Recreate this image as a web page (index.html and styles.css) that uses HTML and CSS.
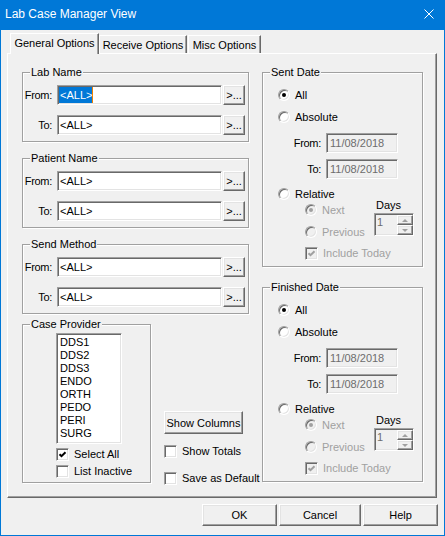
FILE: index.html
```html
<!DOCTYPE html>
<html lang="en">
<head>
    <meta charset="UTF-8">
    <title>Lab Case Manager View</title>
    <link rel="stylesheet" href="styles.css">
</head>
<body>
    <div class="window">
        <div class="titlebar">
            <span class="title">Lab Case Manager View</span>
            <svg class="close" width="10" height="10" viewBox="0 0 10 10">
                <path d="M0.5 0.5L9.5 9.5M9.5 0.5L0.5 9.5" stroke="#fff" stroke-width="1"/>
            </svg>
        </div>

        <div class="tabs">
            <div class="tab tab-general active">General Options</div>
            <div class="tab tab-receive">Receive Options</div>
            <div class="tab tab-misc">Misc Options</div>
        </div>

        <div class="panel">
            <div class="col-left">
                <fieldset class="group range">
                    <legend>Lab Name</legend>
                    <div class="body">
                        <div class="row"><label class="lbl">From:</label><div class="edit"><span class="sel">&lt;ALL&gt;</span></div><button class="btn pick">&gt;...</button></div>
                        <div class="row"><label class="lbl">To:</label><div class="edit">&lt;ALL&gt;</div><button class="btn pick">&gt;...</button></div>
                    </div>
                </fieldset>

                <fieldset class="group range">
                    <legend>Patient Name</legend>
                    <div class="body">
                        <div class="row"><label class="lbl">From:</label><div class="edit">&lt;ALL&gt;</div><button class="btn pick">&gt;...</button></div>
                        <div class="row"><label class="lbl">To:</label><div class="edit">&lt;ALL&gt;</div><button class="btn pick">&gt;...</button></div>
                    </div>
                </fieldset>

                <fieldset class="group range">
                    <legend>Send Method</legend>
                    <div class="body">
                        <div class="row"><label class="lbl">From:</label><div class="edit">&lt;ALL&gt;</div><button class="btn pick">&gt;...</button></div>
                        <div class="row"><label class="lbl">To:</label><div class="edit">&lt;ALL&gt;</div><button class="btn pick">&gt;...</button></div>
                    </div>
                </fieldset>

                <div class="provider-row">
                    <fieldset class="group provider">
                        <legend>Case Provider</legend>
                        <div class="body">
                            <div class="list">
                                <div>DDS1</div>
                                <div>DDS2</div>
                                <div>DDS3</div>
                                <div>ENDO</div>
                                <div>ORTH</div>
                                <div>PEDO</div>
                                <div>PERI</div>
                                <div>SURG</div>
                            </div>
                            <div class="check-row select-all">
                                <span class="check"><svg width="9" height="9" viewBox="0 0 9 9"><path d="M1.5 4.2L3.5 6.2L7.5 2.2" fill="none" stroke="#000" stroke-width="2"/></svg></span>
                                <span class="check-text">Select All</span>
                            </div>
                            <div class="check-row list-inactive">
                                <span class="check"></span>
                                <span class="check-text">List Inactive</span>
                            </div>
                        </div>
                    </fieldset>

                    <div class="side">
                        <button class="btn cols-btn">Show Columns</button>
                        <div class="check-row show-totals">
                            <span class="check"></span>
                            <span class="check-text">Show Totals</span>
                        </div>
                        <div class="check-row save-default">
                            <span class="check"></span>
                            <span class="check-text">Save as Default</span>
                        </div>
                    </div>
                </div>
            </div>

            <div class="col-right">
                <fieldset class="group dates">
                    <legend>Sent Date</legend>
                    <div class="body">
                        <div class="opt"><span class="radio on"></span><span class="opt-text">All</span></div>
                        <div class="opt opt-abs"><span class="radio"></span><span class="opt-text">Absolute</span></div>
                        <div class="date-row first"><label class="lbl">From:</label><div class="edit date">11/08/2018</div></div>
                        <div class="date-row"><label class="lbl">To:</label><div class="edit date">11/08/2018</div></div>
                        <div class="opt opt-rel"><span class="radio"></span><span class="opt-text">Relative</span></div>
                        <div class="rel">
                            <div class="rel-opts">
                                <div class="sub"><span class="radio dis on"></span><span class="opt-text dis-text">Next</span></div>
                                <div class="sub sub-prev"><span class="radio dis"></span><span class="opt-text dis-text">Previous</span></div>
                            </div>
                            <div class="days">
                                <div class="days-label">Days</div>
                                <div class="spin">
                                    <div class="spin-val">1</div>
                                    <div class="spin-btns">
                                        <span class="btn spin-btn"><i class="arrow up"></i></span>
                                        <span class="btn spin-btn"><i class="arrow down"></i></span>
                                    </div>
                                </div>
                            </div>
                        </div>
                        <div class="sub incl">
                            <span class="check dis"><svg width="9" height="9" viewBox="0 0 9 9"><path d="M1.5 4.2L3.5 6.2L7.5 2.2" fill="none" stroke="#a0a0a0" stroke-width="2"/></svg></span>
                            <span class="opt-text dis-text">Include Today</span>
                        </div>
                    </div>
                </fieldset>

                <fieldset class="group dates">
                    <legend>Finished Date</legend>
                    <div class="body">
                        <div class="opt"><span class="radio on"></span><span class="opt-text">All</span></div>
                        <div class="opt opt-abs"><span class="radio"></span><span class="opt-text">Absolute</span></div>
                        <div class="date-row first"><label class="lbl">From:</label><div class="edit date">11/08/2018</div></div>
                        <div class="date-row"><label class="lbl">To:</label><div class="edit date">11/08/2018</div></div>
                        <div class="opt opt-rel"><span class="radio"></span><span class="opt-text">Relative</span></div>
                        <div class="rel">
                            <div class="rel-opts">
                                <div class="sub"><span class="radio dis on"></span><span class="opt-text dis-text">Next</span></div>
                                <div class="sub sub-prev"><span class="radio dis"></span><span class="opt-text dis-text">Previous</span></div>
                            </div>
                            <div class="days">
                                <div class="days-label">Days</div>
                                <div class="spin">
                                    <div class="spin-val">1</div>
                                    <div class="spin-btns">
                                        <span class="btn spin-btn"><i class="arrow up"></i></span>
                                        <span class="btn spin-btn"><i class="arrow down"></i></span>
                                    </div>
                                </div>
                            </div>
                        </div>
                        <div class="sub incl">
                            <span class="check dis"><svg width="9" height="9" viewBox="0 0 9 9"><path d="M1.5 4.2L3.5 6.2L7.5 2.2" fill="none" stroke="#a0a0a0" stroke-width="2"/></svg></span>
                            <span class="opt-text dis-text">Include Today</span>
                        </div>
                    </div>
                </fieldset>
            </div>
        </div>

        <div class="actions">
            <button class="btn action ok">OK</button>
            <button class="btn action cancel">Cancel</button>
            <button class="btn action help">Help</button>
        </div>
    </div>
</body>
</html>
```

FILE: styles.css
```css
body {
    margin: 0;
    font-family: "Liberation Sans", Arial, sans-serif;
    font-size: 11px;
    color: #000;
    background: #fff;
}
.window {
    width: 445px;
    height: 536px;
    box-sizing: border-box;
    border: 1px solid #0078d7;
    border-top: 0;
    background: #f0f0f0;
    display: flex;
    flex-direction: column;
}
.titlebar {
    height: 30px;
    box-sizing: border-box;
    background: #0078d7;
    color: #fff;
    display: flex;
    align-items: center;
    padding: 0 10px 3px 4px;
    font-size: 12px;
}
.title {
    flex: 1;
}

/* tabs */
.tabs {
    display: flex;
    align-items: flex-end;
    height: 20px;
    margin: 3px 0 0 9px;
}
.tab {
    box-sizing: border-box;
    height: 18px;
    border: 1px solid #fff;
    border-right-color: #696969;
    border-bottom: 0;
    box-shadow: inset -1px 0 0 #a0a0a0;
    padding-top: 3px;
    line-height: 13px;
    text-align: center;
    white-space: nowrap;
}
.tab.active {
    height: 21px;
    margin-bottom: -1px;
    position: relative;
    z-index: 1;
    background: #f0f0f0;
}
.tab-general { width: 89px; }
.tab-receive { width: 88px; }
.tab-misc { width: 73px; margin-left: 1px; }

.panel {
    box-sizing: border-box;
    width: 430px;
    height: 445px;
    margin-left: 6px;
    border: 1px solid;
    border-color: #fff #696969 #696969 #fff;
    box-shadow: inset -1px -1px 0 #a0a0a0;
    padding: 12px 0 0 14px;
    display: flex;
    align-items: flex-start;
}
.col-left {
    width: 227px;
    display: flex;
    flex-direction: column;
}
.col-right {
    width: 161px;
    margin-left: 13px;
    display: flex;
    flex-direction: column;
}

/* group boxes */
.group {
    margin: 0;
    padding: 0;
    min-width: 0;
    border: 1px solid #a0a0a0;
    box-shadow: inset 1px 1px 0 #fff, 1px 1px 0 #fff;
}
.group legend {
    margin-left: 7px;
    padding: 0 1px;
    line-height: 13px;
    font-size: 11px;
    background: #f0f0f0;
}
.range + .range { margin-top: 10px; }
.dates + .dates { margin-top: 14px; }

.range .body {
    padding: 6px 0;
    display: flex;
    flex-direction: column;
    gap: 10px;
}
.row {
    display: flex;
    align-items: center;
    height: 20px;
}
.lbl {
    box-sizing: border-box;
    width: 34px;
    padding-right: 5px;
    text-align: right;
    white-space: nowrap;
    letter-spacing: -0.3px;
}
.edit {
    box-sizing: border-box;
    width: 165px;
    height: 20px;
    background: #fff;
    border: 1px solid;
    border-color: #a0a0a0 #fff #fff #a0a0a0;
    box-shadow: inset 1px 1px 0 #696969, inset -1px -1px 0 #e3e3e3;
    padding: 0 2px;
    display: flex;
    align-items: center;
    white-space: nowrap;
}
.sel {
    display: inline-block;
    height: 16px;
    line-height: 16px;
    margin-left: -1px;
    padding-left: 1px;
    background: #0078d7;
    color: #fff;
    border-right: 1px solid #f08000;
}
.btn {
    box-sizing: border-box;
    background: #f0f0f0;
    border: 1px solid;
    border-color: #fff #696969 #696969 #fff;
    box-shadow: inset -1px -1px 0 #a0a0a0, inset 1px 1px 0 #e3e3e3;
    font: inherit;
    color: #000;
    padding: 0;
}
.pick {
    width: 22px;
    height: 20px;
    margin-left: 1px;
}

/* case provider */
.provider-row {
    display: flex;
    align-items: flex-start;
    margin-top: 4px;
}
.provider {
    flex: none;
    width: 127px;
}
.provider .body {
    padding: 2px 0 3px 33px;
}
.list {
    box-sizing: border-box;
    width: 66px;
    height: 111px;
    background: #fff;
    border: 1px solid;
    border-color: #a0a0a0 #fff #fff #a0a0a0;
    box-shadow: inset 1px 1px 0 #696969, inset -1px -1px 0 #e3e3e3;
    padding: 2px 0 0 3px;
    line-height: 13px;
}
.check-row {
    display: flex;
    align-items: center;
    height: 16px;
    white-space: nowrap;
}
.select-all { margin-top: 2px; }
.list-inactive { margin-top: 1px; }
.check {
    box-sizing: border-box;
    width: 13px;
    height: 13px;
    flex: none;
    background: #fff;
    border: 1px solid;
    border-color: #a0a0a0 #fff #fff #a0a0a0;
    box-shadow: inset 1px 1px 0 #696969, inset -1px -1px 0 #e3e3e3;
    display: flex;
    align-items: center;
    justify-content: center;
}
.check.dis {
    background: #f0f0f0;
}
.check-text {
    margin-left: 5px;
}
.side {
    flex: none;
    margin-left: 13px;
    padding-top: 93px;
    display: flex;
    flex-direction: column;
    align-items: flex-start;
}
.cols-btn {
    width: 79px;
    height: 23px;
    white-space: nowrap;
}
.show-totals { margin-top: 9px; }
.save-default { margin-top: 11px; }

/* date groups */
.dates .body {
    padding: 8px 0 5px;
}
.opt {
    display: flex;
    align-items: center;
    height: 16px;
    padding-left: 15px;
}
.opt-abs { margin-top: 6px; }
.opt-rel { margin-top: 7px; }
.opt-text {
    margin-left: 5px;
    white-space: nowrap;
}
.dis-text {
    color: #a0a0a0;
}
.radio {
    box-sizing: border-box;
    width: 12px;
    height: 12px;
    flex: none;
    border-radius: 50%;
    border: 1px solid;
    border-color: #a0a0a0 #fff #fff #a0a0a0;
    box-shadow: inset 1px 1px 0 #696969, inset -1px -1px 0 #e3e3e3;
    background: #fff;
    display: flex;
    align-items: center;
    justify-content: center;
}
.radio.dis {
    background: #f0f0f0;
}
.radio.on::after {
    content: "";
    width: 4px;
    height: 4px;
    border-radius: 50%;
    background: #000;
}
.radio.dis.on::after {
    background: #a0a0a0;
}
.date-row {
    display: flex;
    align-items: center;
    height: 20px;
    margin-top: 6px;
}
.date-row.first { margin-top: 8px; }
.date-row .lbl {
    width: 63px;
    padding-right: 5px;
}
.date {
    width: 72px;
    background: #f0f0f0;
    color: #6d6d6d;
    padding-left: 3px;
}
.rel {
    display: flex;
    padding-left: 42px;
}
.rel-opts {
    width: 69px;
}
.sub {
    display: flex;
    align-items: center;
    height: 16px;
}
.sub-prev { margin-top: 6px; }
.incl {
    margin-top: 5px;
    padding-left: 42px;
}
.days {
    margin-top: -3px;
}
.days-label {
    line-height: 13px;
    margin-left: 2px;
}
.spin {
    box-sizing: border-box;
    width: 40px;
    height: 23px;
    margin-top: 1px;
    background: #f0f0f0;
    border: 1px solid;
    border-color: #a0a0a0 #fff #fff #a0a0a0;
    box-shadow: inset 1px 1px 0 #696969, inset -1px -1px 0 #e3e3e3;
    display: flex;
}
.spin-val {
    flex: 1;
    padding: 2px 0 0 2px;
    color: #6d6d6d;
    line-height: 13px;
}
.spin-btns {
    width: 16px;
    margin-top: 1px;
    display: flex;
    flex-direction: column;
}
.spin-btn {
    height: 10px;
    display: flex;
    align-items: center;
    justify-content: center;
}
.arrow {
    width: 0;
    height: 0;
    border-left: 3px solid transparent;
    border-right: 3px solid transparent;
}
.arrow.up { border-bottom: 3px solid #a0a0a0; }
.arrow.down { border-top: 3px solid #a0a0a0; }

/* dialog buttons */
.actions {
    display: flex;
    justify-content: flex-end;
    margin-top: 6px;
    padding-right: 6px;
}
.action {
    width: 75px;
    height: 22px;
}
.action + .action { margin-left: 2px; }
.cancel { width: 82px; }
```
